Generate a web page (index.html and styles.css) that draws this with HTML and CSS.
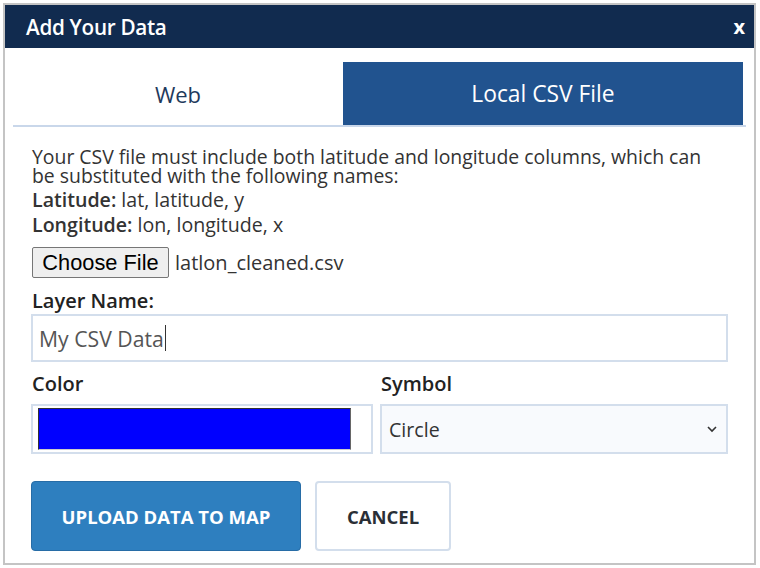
FILE: index.html
```html
<!DOCTYPE html>
<html lang="en">
<head>
<meta charset="utf-8">
<title>Add Your Data</title>
<link rel="stylesheet" href="styles.css">
</head>
<body>
<div class="dialog">
  <div class="dialog-header">
    <span class="dialog-title">Add Your Data</span>
    <span class="dialog-close">x</span>
  </div>
  <div class="dialog-body">
    <div class="tabs">
      <div class="tab tab-web">Web</div>
      <div class="tab tab-local active">Local CSV File</div>
    </div>
    <div class="panel">
      <p class="intro">Your CSV file must include both latitude and longitude columns, which can be substituted with the following names:</p>
      <p class="names"><b>Latitude:</b> lat, latitude, y</p>
      <p class="names"><b>Longitude:</b> lon, longitude, x</p>
      <div class="file-row">
        <span class="file-btn">Choose File</span>
        <span class="file-name">latlon_cleaned.csv</span>
      </div>
      <label class="field-label">Layer Name:</label>
      <div class="text-input">My CSV Data<span class="caret"></span></div>
      <div class="two-col">
        <div class="col">
          <label class="field-label">Color</label>
          <div class="color-input"><span class="swatch"></span></div>
        </div>
        <div class="col">
          <label class="field-label">Symbol</label>
          <div class="select">
            <span>Circle</span>
            <svg class="chev" width="12" height="8" viewBox="0 0 12 8"><path d="M2 2l4 4 4-4" fill="none" stroke="#333" stroke-width="1.6"/></svg>
          </div>
        </div>
      </div>
      <div class="actions">
        <span class="btn btn-primary">UPLOAD DATA TO MAP</span>
        <span class="btn btn-secondary">CANCEL</span>
      </div>
    </div>
  </div>
</div>
</body>
</html>
```
FILE: styles.css
```css
* { box-sizing: border-box; }
html, body { margin: 0; padding: 0; background: #fff; }
body { font-family: "Open Sans", "Lato", sans-serif; color: #333; }

.dialog {
  margin: 3px 4px 0 3px;
  width: 753px;
  height: 562px;
  border: 2px solid #c4c4c4;
  background: #fff;
}

.dialog-header {
  height: 43px;
  background: #112b4f;
  color: #fff;
  display: flex;
  align-items: center;
  justify-content: space-between;
  padding: 0 9px 0 21px;
}
.dialog-title { font-size: 20.7px; font-weight: 600; letter-spacing: -0.3px; }
.dialog-close { font-size: 20px; font-weight: 700; }

.dialog-body { padding: 14px 0 0 8px; }

.tabs {
  display: flex;
  width: 733px;
  border-bottom: 2px solid #c9d7ea;
}
.tab {
  height: 63px;
  display: flex;
  align-items: center;
  justify-content: center;
  font-size: 22px;
  color: #1f3a5c;
}
.tab-web { width: 330px; }
.tab-local { width: 400px; font-size: 22.8px; }
.tab.active { background: #21538f; color: #fff; }

.panel { padding: 20px 0 0 18px; width: 715px; }

.intro {
  margin: 0 0 0 1px;
  width: 690px;
  font-size: 19.4px;
  line-height: 19px;
  color: #333;
}
.names { margin: 4px 0 0 1px; font-size: 19.6px; line-height: 21px; }
.names b { font-weight: 600; }

.file-row { display: flex; align-items: center; margin: 12px 0 0 1px; }
.file-btn {
  font-family: "Liberation Sans", Arial, sans-serif;
  font-size: 21.8px;
  height: 31px;
  width: 137px;
  display: flex;
  align-items: center;
  justify-content: center;
  background: #efefef;
  border: 1px solid #767676;
  border-radius: 2px;
  color: #000;
}
.file-name { font-size: 20px; margin-left: 6px; }

.field-label {
  display: block;
  font-size: 20px;
  font-weight: 600;
  margin: 10px 0 0 1px;
  line-height: 24px;
  color: #222;
}
.file-row + .field-label { margin-top: 11px; }

.text-input {
  margin-top: 1px;
  height: 48px;
  width: 697px;
  border: 2px solid #d3deec;
  display: flex;
  align-items: center;
  padding-left: 6px;
  font-size: 21.2px;
  color: #555;
}
.caret { display: inline-block; width: 1px; height: 26px; background: #333; margin-left: 1px; }

.two-col { display: flex; gap: 7px; margin-top: 0; }
.col:first-child { width: 342px; }
.col:last-child { width: 348px; }

.color-input {
  margin-top: 8px;
  height: 50px;
  border: 2px solid #d3deec;
  padding: 2px 20px 2px 5px;
}
.swatch {
  display: block;
  height: 100%;
  background: #0000ff;
  border-top: 1px solid #333;
  border-left: 1px solid #333;
  border-right: 1px solid #666;
  border-bottom: 1px solid #ccc;
}

.select {
  margin-top: 8px;
  height: 50px;
  border: 2px solid #d3deec;
  background: #f8fafd;
  display: flex;
  align-items: center;
  justify-content: space-between;
  padding: 0 8px 0 7px;
  font-size: 19.6px;
  color: #333;
}

.actions { display: flex; gap: 14px; margin-top: 27px; }
.btn {
  height: 70px;
  display: flex;
  align-items: center;
  justify-content: center;
  font-size: 18.5px;
  font-weight: 700;
  border-radius: 4px;
}
.btn-primary { width: 270px; background: #2e7fbf; color: #fff; border: 1px solid #276ca6; }
.btn-secondary { width: 136px; background: #fff; color: #2a2f36; border: 2px solid #d3deec; }
```
